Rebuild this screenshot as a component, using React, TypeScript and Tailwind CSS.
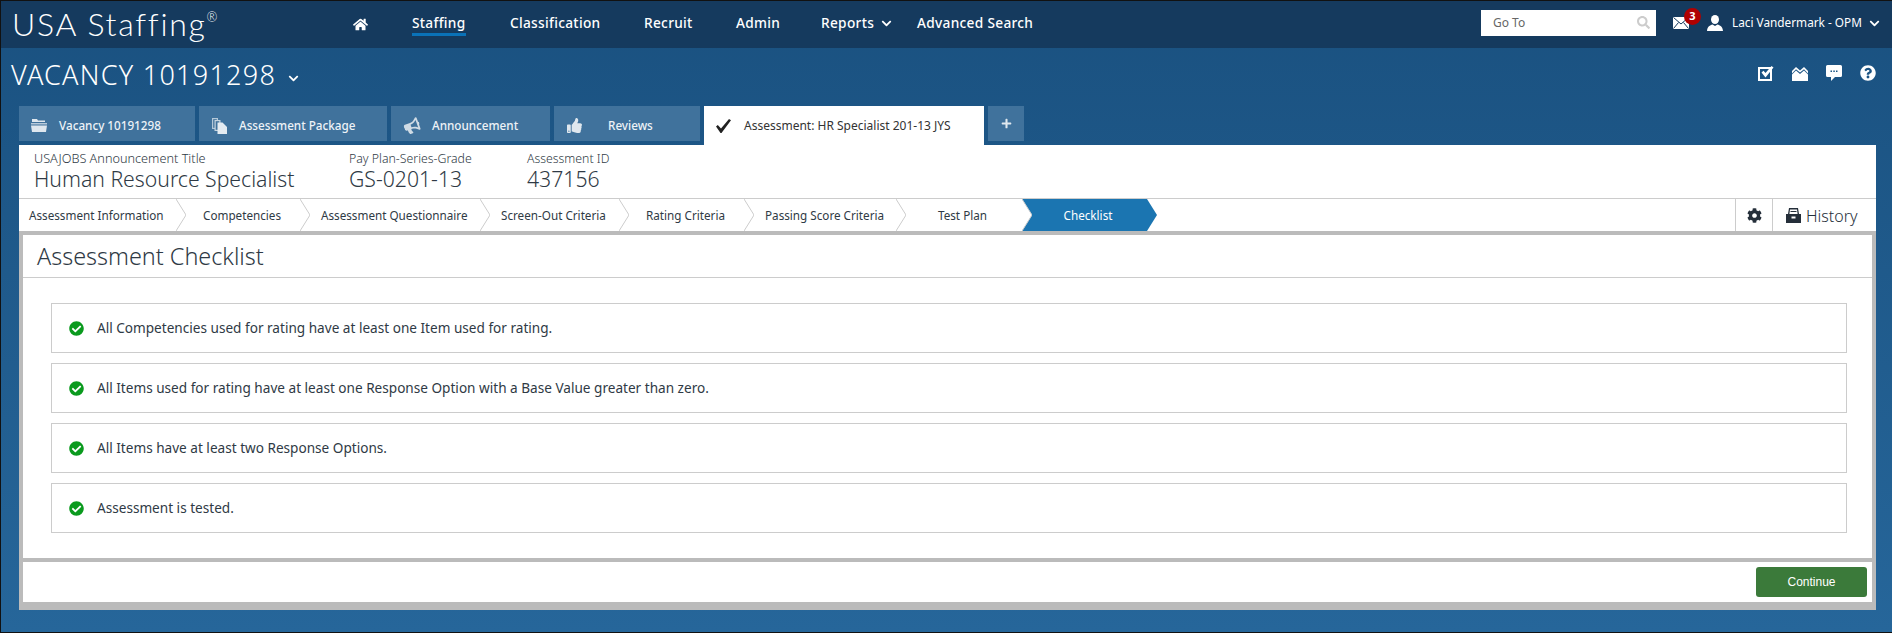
import { FaBullhorn, FaCheckCircle, FaChevronDown, FaCog, FaHome, FaPlus, FaQuestionCircle, FaSearch, FaThumbsUp } from 'react-icons/fa';

const steps = [
    { label: 'Assessment Information', width: 'w-[157px]', pad: 'pl-[10px]' },
    { label: 'Competencies', width: 'w-[124px]', pad: 'pl-[27px]' },
    { label: 'Assessment Questionnaire', width: 'w-[180px]', pad: 'pl-[21px]' },
    { label: 'Screen-Out Criteria', width: 'w-[139px]', pad: 'pl-[21px]' },
    { label: 'Rating Criteria', width: 'w-[125px]', pad: 'pl-[27px]' },
    { label: 'Passing Score Criteria', width: 'w-[152px]', pad: 'pl-[21px]' },
    { label: 'Test Plan', width: 'w-[126px]', pad: 'pl-[42px]' },
];

const checks = [
    'All Competencies used for rating have at least one Item used for rating.',
    'All Items used for rating have at least one Response Option with a Base Value greater than zero.',
    'All Items have at least two Response Options.',
    'Assessment is tested.',
];

const FolderIcon = () => (
    <svg viewBox="0 0 16 13" className="w-[16px] h-[13px]" fill="#dfe7ee">
        <path d="M1 0 H6 L7 1.5 H14 V3 H1 Z" />
        <path d="M0 4 H16 V5.5 H0 Z" opacity="0.75" />
        <path d="M0 6.5 H16 L15 13 H1 Z" />
    </svg>
);

const PagesIcon = () => (
    <svg viewBox="0 0 15 16" className="w-[15px] h-[16px]">
        <path d="M0 0 H6 V11 H0 Z" fill="#b4c8d8" />
        <path d="M1.2 1.2 H4.8 V9.8 H1.2 Z" fill="#40729c" />
        <path d="M2.5 2 H8.5 V13 H2.5 Z" fill="#c6d5e1" />
        <path d="M3.7 3.2 H7.3 V11.8 H3.7 Z" fill="#40729c" />
        <path d="M5.5 4.5 H10.5 L15 9 V16 H5.5 Z" fill="#e4ebf1" />
    </svg>
);

const tabs = [
    { label: 'Vacancy 10191298', icon: <FolderIcon />, width: 'w-[176px]', pad: 'pl-[12px]', gap: 'gap-[12px]' },
    { label: 'Assessment Package', icon: <PagesIcon />, width: 'w-[188px]', pad: 'pl-[13px]', gap: 'gap-[12px]' },
    { label: 'Announcement', icon: <FaBullhorn className="w-[16px] h-[16px] -rotate-[20deg] text-[#cfdbe5]" />, width: 'w-[159px]', pad: 'pl-[13px]', gap: 'gap-[12px]' },
    { label: 'Reviews', icon: <FaThumbsUp className="w-[15px] h-[15px] text-[#dfe7ee]" />, width: 'w-[146px]', pad: 'pl-[13px]', gap: 'gap-[26px]' },
];

const ChartIcon = () => (
    <svg viewBox="0 0 16 15" className="w-[16px] h-[15px]" fill="white">
        <path d="M0 5 L4 1 L8 4.5 L12 1 L16 5 V15 H0 Z M0 7.5 V8.5 L4 4.5 L8 8 L12 4.5 L16 8.5 V7.5 L12 3.2 L8 6.5 L4 3.2 Z" fillRule="evenodd" />
    </svg>
);

const MailIcon = () => (
    <svg viewBox="0 0 16 12" className="w-[16px] h-[12px]">
        <rect width="16" height="12" fill="white" />
        <path d="M0.5 0.5 L8 7 L15.5 0.5 M0.5 11.5 L5.5 5.5 M15.5 11.5 L10.5 5.5" fill="none" stroke="#153a5e" strokeWidth="1" />
    </svg>
);

const UserIcon = () => (
    <svg viewBox="0 0 16 16" className="w-[16px] h-[16px] relative -top-[2px]" fill="white">
        <ellipse cx="8" cy="4.5" rx="4" ry="4.5" />
        <path d="M5.5 9.5 C3 10.5 0.5 11 0 16 H16 C15.5 11 13 10.5 10.5 9.5 L8 11 Z" />
    </svg>
);

const NoteIcon = () => (
    <svg viewBox="0 0 16 16" className="w-[16px] h-[16px]" fill="white">
        <path d="M1.5 0 H14.5 A1.5 1.5 0 0 1 16 1.5 V10.5 A1.5 1.5 0 0 1 14.5 12 H9 L5 16 V12 H1.5 A1.5 1.5 0 0 1 0 10.5 V1.5 A1.5 1.5 0 0 1 1.5 0 Z" />
        <path d="M4.5 5.5 h1.5 v1.5 h-1.5 z M7.3 5.5 h1.5 v1.5 h-1.5 z M10 5.5 h1.5 v1.5 h-1.5 z" fill="#1c5785" />
    </svg>
);

const CheckSquareIcon = () => (
    <svg viewBox="0 0 16 16" className="w-[16px] h-[16px]">
        <rect x="1" y="3" width="12" height="12" fill="none" stroke="white" strokeWidth="2" />
        <path d="M3.5 7.5 L5.5 5.8 L7.5 8 L13.5 1 L15.5 2.5 L7.5 12.5 Z" fill="white" />
    </svg>
);

const TickIcon = () => (
    <svg viewBox="0 0 15 14" className="w-[15px] h-[14px] mt-[2px]" fill="#222">
        <path d="M0 7.5 L1.8 6 L5 9.5 L13 0 L15 1.2 L5.5 14 L4.5 14 Z" />
    </svg>
);

const DrawerIcon = () => (
    <svg viewBox="0 0 15 15" className="w-[15px] h-[15px]" fill="#252f3a">
        <path d="M3 0 H12 L13 6 H15 V15 H0 V6 H2 Z M4 1.5 L3.4 6 H11.6 L11 1.5 Z" fillRule="evenodd" />
        <rect x="4.5" y="3" width="6" height="1" />
        <rect x="5.5" y="8.5" width="4" height="2" fill="white" />
    </svg>
);

export default function App() {
    return (
        <div className="w-[1892px] h-[633px] border-y border-l border-[#111] bg-gradient-to-b from-[#1a5180] to-[#26669a] flex flex-col text-white font-['Noto_Sans',sans-serif] overflow-hidden">
            <header className="h-[47px] shrink-0 bg-[#153a5e] flex items-center relative">
                <span className="ml-[11px] w-[341px] text-[32px] leading-none font-light tracking-[1.7px] font-['Lato',sans-serif] relative -top-[1px] whitespace-nowrap">
                    USA Staffing<span className="text-[13px] align-[14px] tracking-normal">®</span>
                </span>
                <FaHome className="w-[15px] h-[15px]" />
                <nav className="flex items-center text-[13.7px] font-medium tracking-[0.3px] ml-[44px] relative -top-[1px]">
                    <span className="w-[98px]"><span className="border-b-[3px] border-[#0a72b8] pb-[1px]">Staffing</span></span>
                    <span className="w-[134px]">Classification</span>
                    <span className="w-[92px]">Recruit</span>
                    <span className="w-[85px]">Admin</span>
                    <span className="flex items-center w-[96px] gap-[7px]">Reports <FaChevronDown className="w-[11px] h-[11px]" /></span>
                    <span>Advanced Search</span>
                </nav>
                <div className="ml-auto mr-[12px] flex items-center">
                    <div className="w-[175px] h-[26px] bg-white flex items-center justify-between pl-[12px] pr-[6px] text-[#666] text-[12px] relative -top-[2px]">
                        Go To
                        <FaSearch className="w-[13px] h-[13px] text-[#ccc]" />
                    </div>
                    <div className="relative ml-[17px] mr-[18px] -top-[2px]">
                        <MailIcon />
                        <span className="absolute -top-[9px] left-[11px] w-[17px] h-[17px] rounded-full bg-[#b00000] text-[11px] font-bold flex items-center justify-center">3</span>
                    </div>
                    <UserIcon />
                    <span className="ml-[9px] text-[11.8px] w-[137px] relative -top-[2px] whitespace-nowrap">Laci Vandermark - OPM</span>
                    <FaChevronDown className="w-[11px] h-[11px] relative -top-[1px]" />
                </div>
            </header>

            <div className="h-[58px] shrink-0 flex items-start pl-[10px] pr-[16px] pt-[10px]">
                <h1 className="text-[27px] leading-[34px] tracking-[1.25px] font-light">VACANCY 10191298</h1>
                <FaChevronDown className="w-[11px] h-[11px] ml-[12px] mt-[15px]" />
                <div className="ml-auto flex items-center gap-[18px] mt-[7px]">
                    <CheckSquareIcon />
                    <ChartIcon />
                    <NoteIcon />
                    <FaQuestionCircle className="w-[16px] h-[16px]" />
                </div>
            </div>

            <div className="h-[39px] shrink-0 flex items-start gap-[4px] pl-[18px]">
                {tabs.map(tab => (
                    <div key={tab.label} className={`${tab.width} ${tab.pad} ${tab.gap} h-[35px] pt-[4px] bg-[#40729c] flex items-center text-[11.7px] font-medium text-[#eef3f7]`}>
                        {tab.icon}
                        <span>{tab.label}</span>
                    </div>
                ))}
                <div className="w-[280px] h-[39px] bg-white flex items-start pt-[11px] pl-[12px] gap-[13px] text-[#333] text-[12px]">
                    <TickIcon />
                    <span>Assessment: HR Specialist 201-13 JYS</span>
                </div>
                <div className="w-[36px] h-[35px] bg-[#40729c] flex items-center justify-center">
                    <FaPlus className="w-[11px] h-[11px] text-[#dfe8ef]" />
                </div>
            </div>

            <main className="w-[1857px] ml-[18px] h-[465px] shrink-0 bg-white flex flex-col text-[#2f3a45]">
                <div className="h-[53px] shrink-0 flex pl-[15px] pt-[6px]">
                    <div className="w-[315px]">
                        <p className="text-[12.7px] leading-[15px] font-light">USAJOBS Announcement Title</p>
                        <p className="text-[21.2px] leading-[25px] font-light">Human Resource Specialist</p>
                    </div>
                    <div className="w-[178px]">
                        <p className="text-[12.3px] leading-[15px] font-light">Pay Plan-Series-Grade</p>
                        <p className="text-[21.2px] leading-[25px] font-light">GS-0201-13</p>
                    </div>
                    <div>
                        <p className="text-[12.3px] leading-[15px] font-light">Assessment ID</p>
                        <p className="text-[21.2px] leading-[25px] font-light">437156</p>
                    </div>
                </div>

                <div className="h-[33px] shrink-0 border-t border-[#ccc] flex items-stretch text-[11.7px]">
                    {steps.map(step => (
                        <div key={step.label} className={`${step.width} ${step.pad} pt-[2px] relative flex items-center shrink-0`}>
                            {step.label}
                            <svg viewBox="0 0 10 32" preserveAspectRatio="none" className="absolute top-0 -right-[10px] w-[10px] h-[32px] z-10">
                                <path d="M0 0 L10 16 L0 32" fill="none" stroke="#ccc" strokeWidth="1" />
                            </svg>
                        </div>
                    ))}
                    <div className="w-[135px] shrink-0 pt-[2px] pr-[3px] bg-[#1b75b1] text-white flex items-center justify-center [clip-path:polygon(0_0,125px_0,135px_50%,125px_100%,0_100%,10px_50%)]">
                        Checklist
                    </div>
                    <div className="ml-auto w-[37px] border-l border-[#ccc] flex items-center justify-center text-[#252f3a]">
                        <FaCog className="w-[15px] h-[15px]" />
                    </div>
                    <div className="w-[104px] border-l border-[#ccc] pt-[1px] flex items-center pl-[13px] gap-[5px] text-[16px] font-light text-[#252f3a]">
                        <DrawerIcon />
                        History
                    </div>
                </div>

                <section className="flex-1 flex flex-col border-x-4 border-t-4 border-b-[8px] border-[#bbb]">
                    <div className="h-[43px] shrink-0 border-b border-[#ccc] flex items-center pl-[14px] pt-[1px] text-[23.4px] font-light">
                        Assessment Checklist
                    </div>
                    <div className="h-[280px] shrink-0 pt-[25px] pl-[28px] pr-[25px] flex flex-col gap-[10px]">
                        {checks.map(check => (
                            <div key={check} className="h-[50px] shrink-0 border border-[#ccc] flex items-center pl-[17px] gap-[13px] text-[13.6px]">
                                <span className="w-[15px] h-[15px] rounded-full bg-white flex items-center justify-center">
                                    <FaCheckCircle className="w-[15px] h-[15px] text-[#0a9a1e]" />
                                </span>
                                {check}
                            </div>
                        ))}
                    </div>
                    <div className="flex-1 border-t-4 border-[#bbb] flex items-center justify-end pr-[5px]">
                        <button className="w-[111px] h-[30px] rounded-[3px] bg-[#3b7a3a] text-white text-[12px] font-['Liberation_Sans',sans-serif]">Continue</button>
                    </div>
                </section>
            </main>
        </div>
    );
}
